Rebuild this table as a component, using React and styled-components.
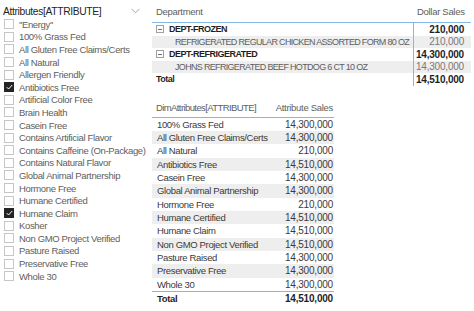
import React from 'react';
import styled, { createGlobalStyle } from 'styled-components';

const GlobalStyle = createGlobalStyle`
  body {
    margin: 0;
    background: #ffffff;
    font-family: "Liberation Sans", Arial, sans-serif;
  }
`;

const attributes = [
  { name: "''Energy''" },
  { name: '100% Grass Fed' },
  { name: 'All Gluten Free Claims/Certs' },
  { name: 'All Natural' },
  { name: 'Allergen Friendly' },
  { name: 'Antibiotics Free', checked: true },
  { name: 'Artificial Color Free' },
  { name: 'Brain Health' },
  { name: 'Casein Free' },
  { name: 'Contains Artificial Flavor' },
  { name: 'Contains Caffeine (On-Package)' },
  { name: 'Contains Natural Flavor' },
  { name: 'Global Animal Partnership' },
  { name: 'Hormone Free' },
  { name: 'Humane Certified' },
  { name: 'Humane Claim', checked: true },
  { name: 'Kosher' },
  { name: 'Non GMO Project Verified' },
  { name: 'Pasture Raised' },
  { name: 'Preservative Free' },
  { name: 'Whole 30' },
];

const departments = [
  {
    name: 'DEPT-FROZEN',
    total: '210,000',
    items: [{ name: 'REFRIGERATED REGULAR CHICKEN ASSORTED FORM 80 OZ', value: '210,000' }],
  },
  {
    name: 'DEPT-REFRIGERATED',
    total: '14,300,000',
    items: [{ name: 'JOHNS REFRIGERATED BEEF HOTDOG 6 CT 10 OZ', value: '14,300,000' }],
  },
];

const attributeSales = [
  ['100% Grass Fed', '14,300,000'],
  ['All Gluten Free Claims/Certs', '14,300,000'],
  ['All Natural', '210,000'],
  ['Antibiotics Free', '14,510,000'],
  ['Casein Free', '14,300,000'],
  ['Global Animal Partnership', '14,300,000'],
  ['Hormone Free', '210,000'],
  ['Humane Certified', '14,510,000'],
  ['Humane Claim', '14,510,000'],
  ['Non GMO Project Verified', '14,510,000'],
  ['Pasture Raised', '14,300,000'],
  ['Preservative Free', '14,300,000'],
  ['Whole 30', '14,300,000'],
];

const App = () => {
  return (
    <Page>
      <GlobalStyle />
      <Slicer>
        <SlicerHeader>
          <SlicerTitle>Attributes[ATTRIBUTE]</SlicerTitle>
          <svg width="9" height="6" viewBox="0 0 9 6">
            <path d="M0.5 0.8 L4.5 4.8 L8.5 0.8" fill="none" stroke="#9a9a9a" strokeWidth="0.9" />
          </svg>
        </SlicerHeader>
        {attributes.map((a) => (
          <SlicerItem key={a.name}>
            <CheckBox checked={a.checked}>
              {a.checked && (
                <svg width="7" height="6" viewBox="0 0 7 6">
                  <path d="M0.8 3.2 L2.6 5 L6.2 1" fill="none" stroke="#fff" strokeWidth="1" />
                </svg>
              )}
            </CheckBox>
            <span>{a.name}</span>
          </SlicerItem>
        ))}
      </Slicer>

      <Visuals>
        <MatrixTable>
          <HeaderRow>
            <HeadCell>Department</HeadCell>
            <HeadCell align="right">Dollar Sales</HeadCell>
          </HeaderRow>
          {departments.map((d) => (
            <React.Fragment key={d.name}>
              <MatrixRow>
                <LabelCell bold>
                  <Collapse />
                  {d.name}
                </LabelCell>
                <ValueCell bold>{d.total}</ValueCell>
              </MatrixRow>
              {d.items.map((it) => (
                <MatrixRow key={it.name} shaded>
                  <LabelCell indent>{it.name}</LabelCell>
                  <ValueCell>{it.value}</ValueCell>
                </MatrixRow>
              ))}
            </React.Fragment>
          ))}
          <MatrixRow>
            <LabelCell bold>Total</LabelCell>
            <ValueCell bold>14,510,000</ValueCell>
          </MatrixRow>
        </MatrixTable>

        <SalesTable>
          <SalesHeader>
            <HeadCell tight>DimAttributes[ATTRIBUTE]</HeadCell>
            <HeadCell align="right">Attribute Sales</HeadCell>
          </SalesHeader>
          {attributeSales.map(([name, value], i) => (
            <SalesRow key={name} shaded={i % 2 === 1}>
              <span>{name}</span>
              <Num>{value}</Num>
            </SalesRow>
          ))}
          <SalesTotal>
            <span>Total</span>
            <Num>14,510,000</Num>
          </SalesTotal>
        </SalesTable>
      </Visuals>
    </Page>
  );
};

export default App;

const Page = styled.div`
  display: flex;
  width: 474px;
  height: 311px;
  overflow: hidden;
`;

const Slicer = styled.div`
  width: 148px;
  padding: 3px 0 0 3px;
  box-sizing: border-box;
  flex-shrink: 0;
`;

const SlicerHeader = styled.div`
  display: flex;
  justify-content: space-between;
  align-items: center;
  height: 15px;
  padding: 1px 8px 0 0;
  box-sizing: border-box;
`;

const SlicerTitle = styled.span`
  font-size: 10.3px;
  letter-spacing: -0.35px;
  color: #252423;
`;

const SlicerItem = styled.div`
  display: flex;
  align-items: center;
  gap: 5px;
  height: 12.6px;
  padding-left: 1px;
  font-size: 9.5px;
  letter-spacing: -0.35px;
  color: #605e5c;
  white-space: nowrap;
`;

const CheckBox = styled.div`
  width: 8px;
  height: 8px;
  border: 1px solid ${(p) => (p.checked ? '#252423' : '#c8c6c4')};
  background: ${(p) => (p.checked ? '#252423' : '#ffffff')};
  display: flex;
  align-items: center;
  justify-content: center;
  flex-shrink: 0;
`;

const Visuals = styled.div`
  display: flex;
  flex-direction: column;
  padding-left: 4px;
  gap: 10px;
`;

const MatrixTable = styled.div`
  width: 319px;
  display: flex;
  flex-direction: column;
`;

const HeaderRow = styled.div`
  display: grid;
  grid-template-columns: 261px 1fr;
  height: 22px;
  border-bottom: 1px solid #85b7e6;
  box-sizing: content-box;
`;

const HeadCell = styled.div`
  font-size: 9.5px;
  letter-spacing: ${(p) => (p.tight ? '-0.6px' : '-0.3px')};
  color: #605e5c;
  padding: 6px ${(p) => (p.align === 'right' ? '7px' : '0')} 0 4px;
  text-align: ${(p) => p.align || 'left'};
  white-space: nowrap;
`;

const MatrixRow = styled.div`
  display: grid;
  grid-template-columns: 261px 1fr;
  height: 12.5px;
  align-items: center;
  background: ${(p) => (p.shaded ? '#eeeeee' : 'transparent')};
`;

const LabelCell = styled.div`
  display: flex;
  align-items: center;
  height: 100%;
  padding-left: ${(p) => (p.indent ? '23px' : '4px')};
  font-size: 9px;
  letter-spacing: ${(p) => (p.bold ? '-0.5px' : '-0.68px')};
  font-weight: ${(p) => (p.bold ? 700 : 400)};
  color: ${(p) => (p.bold ? '#1f1f1f' : '#605e5c')};
  white-space: nowrap;
  overflow: hidden;
`;

const Collapse = styled.span`
  position: relative;
  width: 6px;
  height: 6px;
  border: 1px solid #a0a0a0;
  margin-right: 5px;
  flex-shrink: 0;

  &::after {
    content: '';
    position: absolute;
    left: 1px;
    right: 1px;
    top: 2.5px;
    height: 1px;
    background: #707070;
  }
`;

const ValueCell = styled.div`
  height: 100%;
  display: flex;
  align-items: center;
  justify-content: flex-end;
  padding-right: 7px;
  border-left: 1px solid #85b7e6;
  font-size: 10px;
  letter-spacing: -0.2px;
  font-weight: ${(p) => (p.bold ? 700 : 400)};
  color: ${(p) => (p.bold ? '#1f1f1f' : '#7a7876')};
  white-space: nowrap;
`;

const SalesTable = styled.div`
  width: 182px;
  display: flex;
  flex-direction: column;
`;

const SalesHeader = styled.div`
  display: flex;
  justify-content: space-between;
  height: 21px;
  border-bottom: 1px solid #85b7e6;
  box-sizing: content-box;

  & > div:last-child {
    padding-right: 1px;
  }
`;

const SalesRow = styled.div`
  display: flex;
  justify-content: space-between;
  align-items: center;
  height: 13.35px;
  padding: 0 1px 0 5px;
  font-size: 9.5px;
  letter-spacing: -0.35px;
  color: #3b3a39;
  background: ${(p) => (p.shaded ? '#eeeeee' : 'transparent')};
  white-space: nowrap;
`;

const Num = styled.span`
  font-size: 10px;
  letter-spacing: -0.2px;
`;

const SalesTotal = styled(SalesRow)`
  border-top: 1px solid #85b7e6;
  font-weight: 700;
  color: #1f1f1f;
  height: 13px;
`;
